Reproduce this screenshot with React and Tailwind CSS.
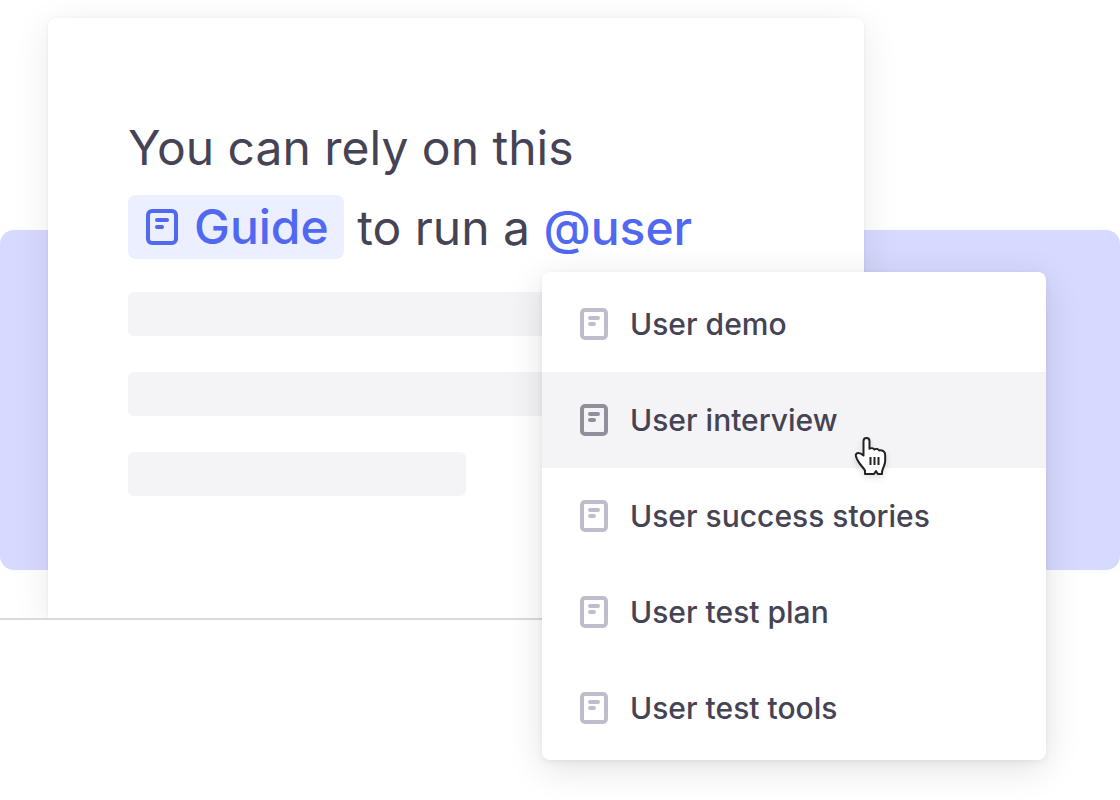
import React from 'react';
import clsx from 'clsx';

const menuItems = [
    { id: 1, label: 'User demo' },
    { id: 2, label: 'User interview', active: true },
    { id: 3, label: 'User success stories' },
    { id: 4, label: 'User test plan' },
    { id: 5, label: 'User test tools' },
];

const DocIcon = ({ className }) => (
    <svg viewBox="0 0 28 32" fill="none" stroke="currentColor" strokeWidth="4" className={className} aria-hidden="true">
        <rect x="2" y="2" width="24" height="28" rx="3" />
        <path d="M10 10h8M10 16h4" strokeLinecap="round" />
    </svg>
);

const GuideIcon = ({ className }) => (
    <svg viewBox="0 0 32 36" fill="none" stroke="currentColor" strokeWidth="4" className={className} aria-hidden="true">
        <rect x="2" y="2" width="28" height="32" rx="4" />
        <path d="M11 11h10M11 18h5" strokeLinecap="round" />
    </svg>
);

const HandCursor = ({ className }) => (
    <svg viewBox="0 0 36 42" className={className} aria-hidden="true">
        <path
            d="M9.500 20.500V6.300c0-4.400 6-4.400 6 0v7.400c1.500-.9 3.800-.6 4.800.8 1.700-.9 4-.5 4.900 1 3-.6 6 .8 6 4.500v5.500c0 5-2.600 7.500-3.200 11.500v2h-4.200L22 36l-2 3H11v-3.500c-2-3.400-5.500-6-7.500-10.500-1.500-3-2.500-4.500-1.300-6 1.500-1.700 4.500-.9 7.300 1.500z"
            fill="white"
            stroke="#222222"
            strokeWidth="2"
            strokeLinejoin="round"
        />
        <path d="M16.500 22v8M20.500 22v8M24.500 22v8" stroke="#222222" strokeWidth="2" />
    </svg>
);

const SuggestionMenu = () => (
    <div className="absolute left-[542px] top-[272px] w-[504px] rounded-lg bg-white py-1 shadow-[0_2px_6px_rgba(0,0,0,0.06),0_8px_36px_rgba(0,0,0,0.12)]">
        <ul>
            {menuItems.map((item) => (
                <li key={item.id}>
                    <button
                        type="button"
                        className={clsx(
                            'flex h-24 w-full cursor-pointer items-center gap-[22px] px-[38px] text-left text-[30px] font-medium text-[#454354]',
                            item.active && 'bg-[#f4f4f6]'
                        )}
                    >
                        <DocIcon className={clsx('h-8 w-7 shrink-0', item.active ? 'text-[#918f9c]' : 'text-[#bfbdcb]')} />
                        {item.label}
                    </button>
                </li>
            ))}
        </ul>
        <HandCursor className="absolute left-[312px] top-[163px] h-[42px] w-9 drop-shadow-md" />
    </div>
);

const App = () => {
    return (
        <main className="relative min-h-screen overflow-hidden bg-white font-['Inter',sans-serif] text-[#454354]">
            <section className="relative overflow-hidden pt-[18px] pl-12">
                <div className="absolute inset-x-0 top-[230px] h-[340px] rounded-[14px] bg-[#d7daff]" />

                <article className="relative w-full max-w-[816px] rounded-t-lg bg-white px-20 pt-[90px] pb-[122px] shadow-[0_0_4px_rgba(0,0,0,0.05),0_8px_36px_rgba(0,0,0,0.09)]">
                    <p className="text-5xl leading-[80px]">
                        You can rely on this
                        <br />
                        <a href="#guide" className="inline-flex h-16 items-center gap-4 rounded-lg bg-[#ecefff] pr-[15px] pl-[18px] align-baseline font-medium text-[#5069f0]">
                            <GuideIcon className="h-9 w-8" />
                            <span>Guide</span>
                        </a>{' '}
                        to run a <span className="font-medium text-[#5069f0]">@user</span>
                    </p>

                    <div className="mt-6 space-y-9">
                        <div className="h-11 rounded-md bg-[#f4f4f6]" />
                        <div className="h-11 rounded-md bg-[#f4f4f6]" />
                        <div className="h-11 w-[338px] rounded-md bg-[#f4f4f6]" />
                    </div>
                </article>
            </section>
            <hr className="w-full max-w-[864px] border-t-2 border-[#dad9e0]" />

            <SuggestionMenu />
        </main>
    );
};

export default App;
